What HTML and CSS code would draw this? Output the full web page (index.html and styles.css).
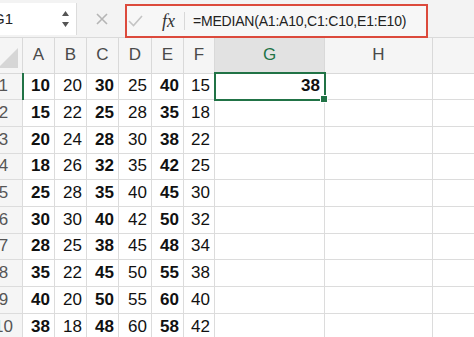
FILE: index.html
```html
<!DOCTYPE html>
<html>
<head>
    <meta charset="UTF-8">
    <title>MEDIAN</title>
    <link rel="stylesheet" href="styles.css">
</head>
<body>
    <div class="toolbar">
        <div class="name-box">
            <span class="name-text">G1</span>
            <span class="spin">
                <svg width="9" height="20" viewBox="0 0 9 20"><path d="M1 7 L4.5 2 L8 7 Z M1 13 L4.5 18 L8 13 Z" fill="#555"/></svg>
            </span>
        </div>
        <div class="cancel">
            <svg width="12" height="12" viewBox="0 0 12 12"><path d="M1 1 L11 11 M11 1 L1 11" stroke="#b5b5b5" stroke-width="1.6"/></svg>
        </div>
        <div class="formula-box">
            <svg class="check" width="15" height="12" viewBox="0 0 15 12"><path d="M1 6 L5.5 10.5 L14 1" stroke="#c4c4c4" stroke-width="1.6" fill="none"/></svg>
            <span class="fx">fx</span>
            <span class="formula">=MEDIAN(A1:A10,C1:C10,E1:E10)</span>
        </div>
    </div>

    <table class="sheet">
        <colgroup>
            <col style="width: 38px">
            <col style="width: 32px">
            <col style="width: 32px">
            <col style="width: 32px">
            <col style="width: 33px">
            <col style="width: 32px">
            <col style="width: 31px">
            <col style="width: 110px">
            <col style="width: 108px">
            <col style="width: 70px">
        </colgroup>
        <thead>
            <tr>
                <th class="corner"><span class="tri"></span></th>
                <th>A</th><th>B</th><th>C</th><th>D</th><th>E</th><th>F</th>
                <th class="active">G</th><th>H</th><th></th>
            </tr>
        </thead>
        <tbody>
            <tr><td class="rh sel">1</td><td class="b">10</td><td>20</td><td class="b">30</td><td>25</td><td class="b">40</td><td>15</td><td class="b picked">38<span class="handle"></span></td><td></td><td></td></tr>
            <tr><td class="rh">2</td><td class="b">15</td><td>22</td><td class="b">25</td><td>28</td><td class="b">35</td><td>18</td><td></td><td></td><td></td></tr>
            <tr><td class="rh">3</td><td class="b">20</td><td>24</td><td class="b">28</td><td>30</td><td class="b">38</td><td>22</td><td></td><td></td><td></td></tr>
            <tr><td class="rh">4</td><td class="b">18</td><td>26</td><td class="b">32</td><td>35</td><td class="b">42</td><td>25</td><td></td><td></td><td></td></tr>
            <tr><td class="rh">5</td><td class="b">25</td><td>28</td><td class="b">35</td><td>40</td><td class="b">45</td><td>30</td><td></td><td></td><td></td></tr>
            <tr><td class="rh">6</td><td class="b">30</td><td>30</td><td class="b">40</td><td>42</td><td class="b">50</td><td>32</td><td></td><td></td><td></td></tr>
            <tr><td class="rh">7</td><td class="b">28</td><td>25</td><td class="b">38</td><td>45</td><td class="b">48</td><td>34</td><td></td><td></td><td></td></tr>
            <tr><td class="rh">8</td><td class="b">35</td><td>22</td><td class="b">45</td><td>50</td><td class="b">55</td><td>38</td><td></td><td></td><td></td></tr>
            <tr><td class="rh">9</td><td class="b">40</td><td>20</td><td class="b">50</td><td>55</td><td class="b">60</td><td>40</td><td></td><td></td><td></td></tr>
            <tr><td class="rh">10</td><td class="b">38</td><td>18</td><td class="b">48</td><td>60</td><td class="b">58</td><td>42</td><td></td><td></td><td></td></tr>
        </tbody>
    </table>
</body>
</html>
```

FILE: styles.css
```css
/* 页面整体 */
body {
    margin: 0;
    width: 474px;
    height: 337px;
    overflow: hidden;
    background: #fff;
    font-family: "Liberation Sans", Arial, sans-serif;
    color: #111;
}

/* 顶部编辑栏 */
.toolbar {
    height: 38px;
    display: flex;
    align-items: center;
    background: #f3f3f3;
    border-bottom: 1px solid #dadada;
    box-sizing: border-box;
}

.name-box {
    width: 86px;
    height: 32px;
    margin-left: -9px;
    background: #fff;
    border-right: 1px solid #dcdcdc;
    display: flex;
    align-items: center;
    justify-content: space-between;
    box-sizing: border-box;
    padding: 0 6px 0 2px;
}
.name-text {
    font-size: 15px;
    color: #222;
}
.spin {
    display: flex;
}

.cancel {
    width: 46px;
    display: flex;
    justify-content: center;
    margin-left: 2px;
}

/* 公式框，红框标出 */
.formula-box {
    width: 303px;
    height: 34px;
    margin-top: 4px;
    align-self: flex-start;
    border: 2px solid #dc4a3c;
    box-sizing: border-box;
    background: #f7f7f7;
    display: flex;
    align-items: center;
}
.check {
    margin-left: 1px;
}
.fx {
    font-family: "Liberation Serif", serif;
    font-style: italic;
    font-size: 18px;
    color: #333;
    margin-left: 19px;
    padding-right: 9px;
    border-right: 1px solid #d8d8d8;
    line-height: 18px;
}
.formula {
    margin-left: 8px;
    font-size: 14px;
    letter-spacing: -0.2px;
    color: #222;
    white-space: nowrap;
}

/* 表格 */
.sheet {
    border-collapse: collapse;
    table-layout: fixed;
    margin-left: -16px;
    width: 518px;
}
.sheet th {
    height: 35px;
    padding: 0;
    background: #f5f5f5;
    font-weight: normal;
    font-size: 17px;
    color: #4a4a4a;
    border: 1px solid #d9d9d9;
    border-top: none;
    box-sizing: border-box;
}
.sheet th.active {
    background: #e2e2e2;
    color: #217346;
}
.sheet th.corner {
    position: relative;
}
.tri {
    position: absolute;
    right: 4px;
    bottom: 5px;
    width: 0;
    height: 0;
    border-left: 20px solid transparent;
    border-bottom: 20px solid #d6d6d6;
}

.sheet td {
    height: 26.7px;
    padding: 0 4px 0 0;
    text-align: right;
    font-size: 17px;
    border: 1px solid #dcdcdc;
    box-sizing: border-box;
    white-space: nowrap;
}
.sheet td.b {
    font-weight: bold;
}
.sheet td.rh {
    background: #f5f5f5;
    color: #555;
    text-align: center;
    padding: 0;
}
.sheet td.rh.sel {
    border-right: 2px solid #217346;
}

/* 选中单元格 G1 */
.sheet td.picked {
    position: relative;
    outline: 2px solid #217346;
    outline-offset: -1px;
}
.handle {
    position: absolute;
    right: -4px;
    bottom: -4px;
    width: 6px;
    height: 6px;
    background: #217346;
    border: 1px solid #fff;
}
```
